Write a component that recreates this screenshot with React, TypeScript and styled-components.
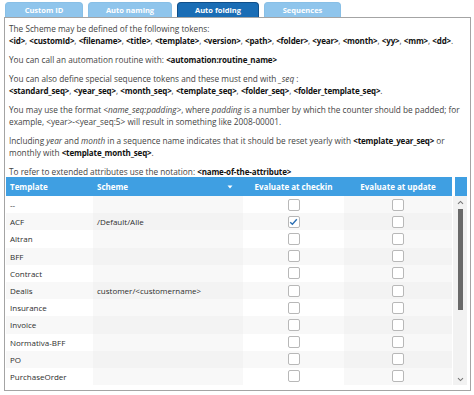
import styled, { createGlobalStyle } from 'styled-components';

const GlobalStyle = createGlobalStyle`
    body {
        margin: 0;
        background: #ffffff;
        font-family: "Open Sans", "Liberation Sans", sans-serif;
    }
`

interface RowItem {
    template: string,
    scheme: string,
    checkin: boolean,
    update: boolean
}

const tabs = ['Custom ID', 'Auto naming', 'Auto folding', 'Sequences'];
const tabWidths = [78, 84, 82, 77];

const rows: RowItem[] = [
    { template: '--', scheme: '', checkin: false, update: false },
    { template: 'ACF', scheme: '/Default/Alle', checkin: true, update: false },
    { template: 'Altran', scheme: '', checkin: false, update: false },
    { template: 'BFF', scheme: '', checkin: false, update: false },
    { template: 'Contract', scheme: '', checkin: false, update: false },
    { template: 'Dealis', scheme: 'customer/<customername>', checkin: false, update: false },
    { template: 'Insurance', scheme: '', checkin: false, update: false },
    { template: 'Invoice', scheme: '', checkin: false, update: false },
    { template: 'Normativa-BFF', scheme: '', checkin: false, update: false },
    { template: 'PO', scheme: '', checkin: false, update: false },
    { template: 'PurchaseOrder', scheme: '', checkin: false, update: false },
];

const Page = styled('div')`
    padding: 2px 3px 0 4px;
    width: 467px;
`

const TabBar = styled('div')`
    display: flex;
    gap: 5px;
    padding-left: 1px;
    height: 15px;
`

const Tab = styled('div')<{ $active: boolean, $w: number }>`
    width: ${p => p.$w}px;
    box-sizing: border-box;
    height: 15px;
    border-radius: 4px 4px 0 0;
    background: ${p => p.$active ? '#1a6db5' : '#8fc5ec'};
    border: 1px solid ${p => p.$active ? '#0f4f8a' : '#88bfe6'};
    border-bottom: none;
    color: #ffffff;
    font-size: 7.5px;
    font-weight: 700;
    display: flex;
    align-items: center;
    justify-content: center;
`

const Panel = styled('div')`
    box-sizing: border-box;
    height: 374px;
    border: 1px solid #a4a4a4;
    padding: 5px 3px 0 4px;
    display: flex;
    flex-direction: column;
`

const Text = styled('p')`
    margin: 0 0 7px;
    font-size: 8.25px;
    line-height: 12px;
    color: #444444;

    b {
        color: #111111;
        font-weight: 700;
        font-size: 8px;
        letter-spacing: -0.15px;
    }
    &:last-of-type {
        margin-bottom: 0;
    }
`

const TableArea = styled('div')`
    display: flex;
    gap: 1px;
    margin-left: -3px;
    margin-top: -1px;
`

const Grid = styled('div')`
    display: grid;
    grid-template-columns: 87px 150px 101px 108px;
    width: 446px;
`

const HeadCell = styled('div')<{ $center?: boolean }>`
    height: 19px;
    background: #3f9fe2;
    color: #ffffff;
    font-size: 8px;
    font-weight: 700;
    display: flex;
    align-items: center;
    justify-content: ${p => p.$center ? 'center' : 'flex-start'};
    padding: 0 ${p => p.$center ? 0 : 4}px;
`

const SchemeHead = styled(HeadCell)`
    justify-content: space-between;
    padding-right: 10px;
`

const Cell = styled('div')<{ $shade: number, $center?: boolean }>`
    height: 17.2px;
    background: ${p => ['#ffffff', '#f8f8f8', '#f3f3f3'][p.$shade]};
    font-size: 8px;
    color: #2e2e2e;
    display: flex;
    align-items: center;
    justify-content: ${p => p.$center ? 'center' : 'flex-start'};
    padding: 0 ${p => p.$center ? 0 : 4}px;
`

const Box = styled('div')`
    box-sizing: border-box;
    width: 12px;
    height: 12px;
    border: 1px solid #b8b8b8;
    border-radius: 2px;
    background: #ffffff;
    display: flex;
    align-items: center;
    justify-content: center;
`

const ScrollColumn = styled('div')`
    width: 15px;
    display: flex;
    flex-direction: column;
`

const ScrollHead = styled('div')`
    height: 19px;
    background: #3f9fe2;
    margin-left: 2px;
`

const ScrollTrack = styled('div')`
    flex: 1;
    background: #f2f2f2;
    display: flex;
    flex-direction: column;
    align-items: center;
    padding: 4px 0 3px;
`

const Thumb = styled('div')`
    width: 5px;
    height: 101px;
    background: #6a6a6a;
    margin-top: 4px;
    margin-bottom: auto;
`

const Caret = ({ down }: { down?: boolean }) => (
    <svg width="7" height="5" viewBox="0 0 7 5">
        <path d={down ? 'M1 1.2 L3.5 3.6 L6 1.2' : 'M1 3.8 L3.5 1.4 L6 3.8'} fill="none" stroke="#777" strokeWidth="1.1" />
    </svg>
)

const Check = () => (
    <svg width="9" height="8" viewBox="0 0 9 8">
        <path d="M1.2 4.2 L3.4 6.3 L7.8 1.3" fill="none" stroke="#2c6fb3" strokeWidth="1.4" />
    </svg>
)

const SortArrow = () => (
    <svg width="6" height="4" viewBox="0 0 6 4">
        <path d="M0.5 0.5 L5.5 0.5 L3 3.5 Z" fill="#ffffff" />
    </svg>
)

const App = () => {
    return (
        <>
            <GlobalStyle />
            <Page>
                <TabBar>
                    {tabs.map((t, i) => (
                        <Tab key={t} $active={i === 2} $w={tabWidths[i]}>{t}</Tab>
                    ))}
                </TabBar>
                <Panel>
                    <Text>
                        The Scheme may be defined of the following tokens:<br />
                        <b>&lt;id&gt;</b>, <b>&lt;customId&gt;</b>, <b>&lt;filename&gt;</b>, <b>&lt;title&gt;</b>, <b>&lt;template&gt;</b>, <b>&lt;version&gt;</b>, <b>&lt;path&gt;</b>, <b>&lt;folder&gt;</b>, <b>&lt;year&gt;</b>, <b>&lt;month&gt;</b>, <b>&lt;yy&gt;</b>, <b>&lt;mm&gt;</b>, <b>&lt;dd&gt;</b>.
                    </Text>
                    <Text>
                        You can call an automation routine with: <b>&lt;automation:routine_name&gt;</b>
                    </Text>
                    <Text>
                        You can also define special sequence tokens and these must end with <i>_seq</i> :<br />
                        <b>&lt;standard_seq&gt;</b>, <b>&lt;year_seq&gt;</b>, <b>&lt;month_seq&gt;</b>, <b>&lt;template_seq&gt;</b>, <b>&lt;folder_seq&gt;</b>, <b>&lt;folder_template_seq&gt;</b>.
                    </Text>
                    <Text>
                        You may use the format <i>&lt;name_seq:padding&gt;</i>, where <i>padding</i> is a number by which the counter should be padded; for example, &lt;year&gt;-&lt;year_seq:5&gt; will result in something like 2008-00001.
                    </Text>
                    <Text>
                        Including <i>year</i> and <i>month</i> in a sequence name indicates that it should be reset yearly with <b>&lt;template_year_seq&gt;</b> or monthly with <b>&lt;template_month_seq&gt;</b>.
                    </Text>
                    <Text>
                        To refer to extended attributes use the notation: <b>&lt;name-of-the-attribute&gt;</b>
                    </Text>
                    <TableArea>
                        <Grid>
                            <HeadCell>Template</HeadCell>
                            <SchemeHead>Scheme<SortArrow /></SchemeHead>
                            <HeadCell $center>Evaluate at checkin</HeadCell>
                            <HeadCell $center>Evaluate at update</HeadCell>
                            {rows.map((r, i) => {
                                const odd = i % 2 === 1;
                                return [
                                    <Cell key={`t${i}`} $shade={odd ? 1 : 0}>{r.template}</Cell>,
                                    <Cell key={`s${i}`} $shade={odd ? 2 : 1}>{r.scheme}</Cell>,
                                    <Cell key={`c${i}`} $shade={odd ? 1 : 0} $center>
                                        <Box>{r.checkin && <Check />}</Box>
                                    </Cell>,
                                    <Cell key={`u${i}`} $shade={odd ? 2 : 1} $center>
                                        <Box>{r.update && <Check />}</Box>
                                    </Cell>,
                                ];
                            })}
                        </Grid>
                        <ScrollColumn>
                            <ScrollHead />
                            <ScrollTrack>
                                <Caret />
                                <Thumb />
                                <Caret down />
                            </ScrollTrack>
                        </ScrollColumn>
                    </TableArea>
                </Panel>
            </Page>
        </>
    )
}

export default App
